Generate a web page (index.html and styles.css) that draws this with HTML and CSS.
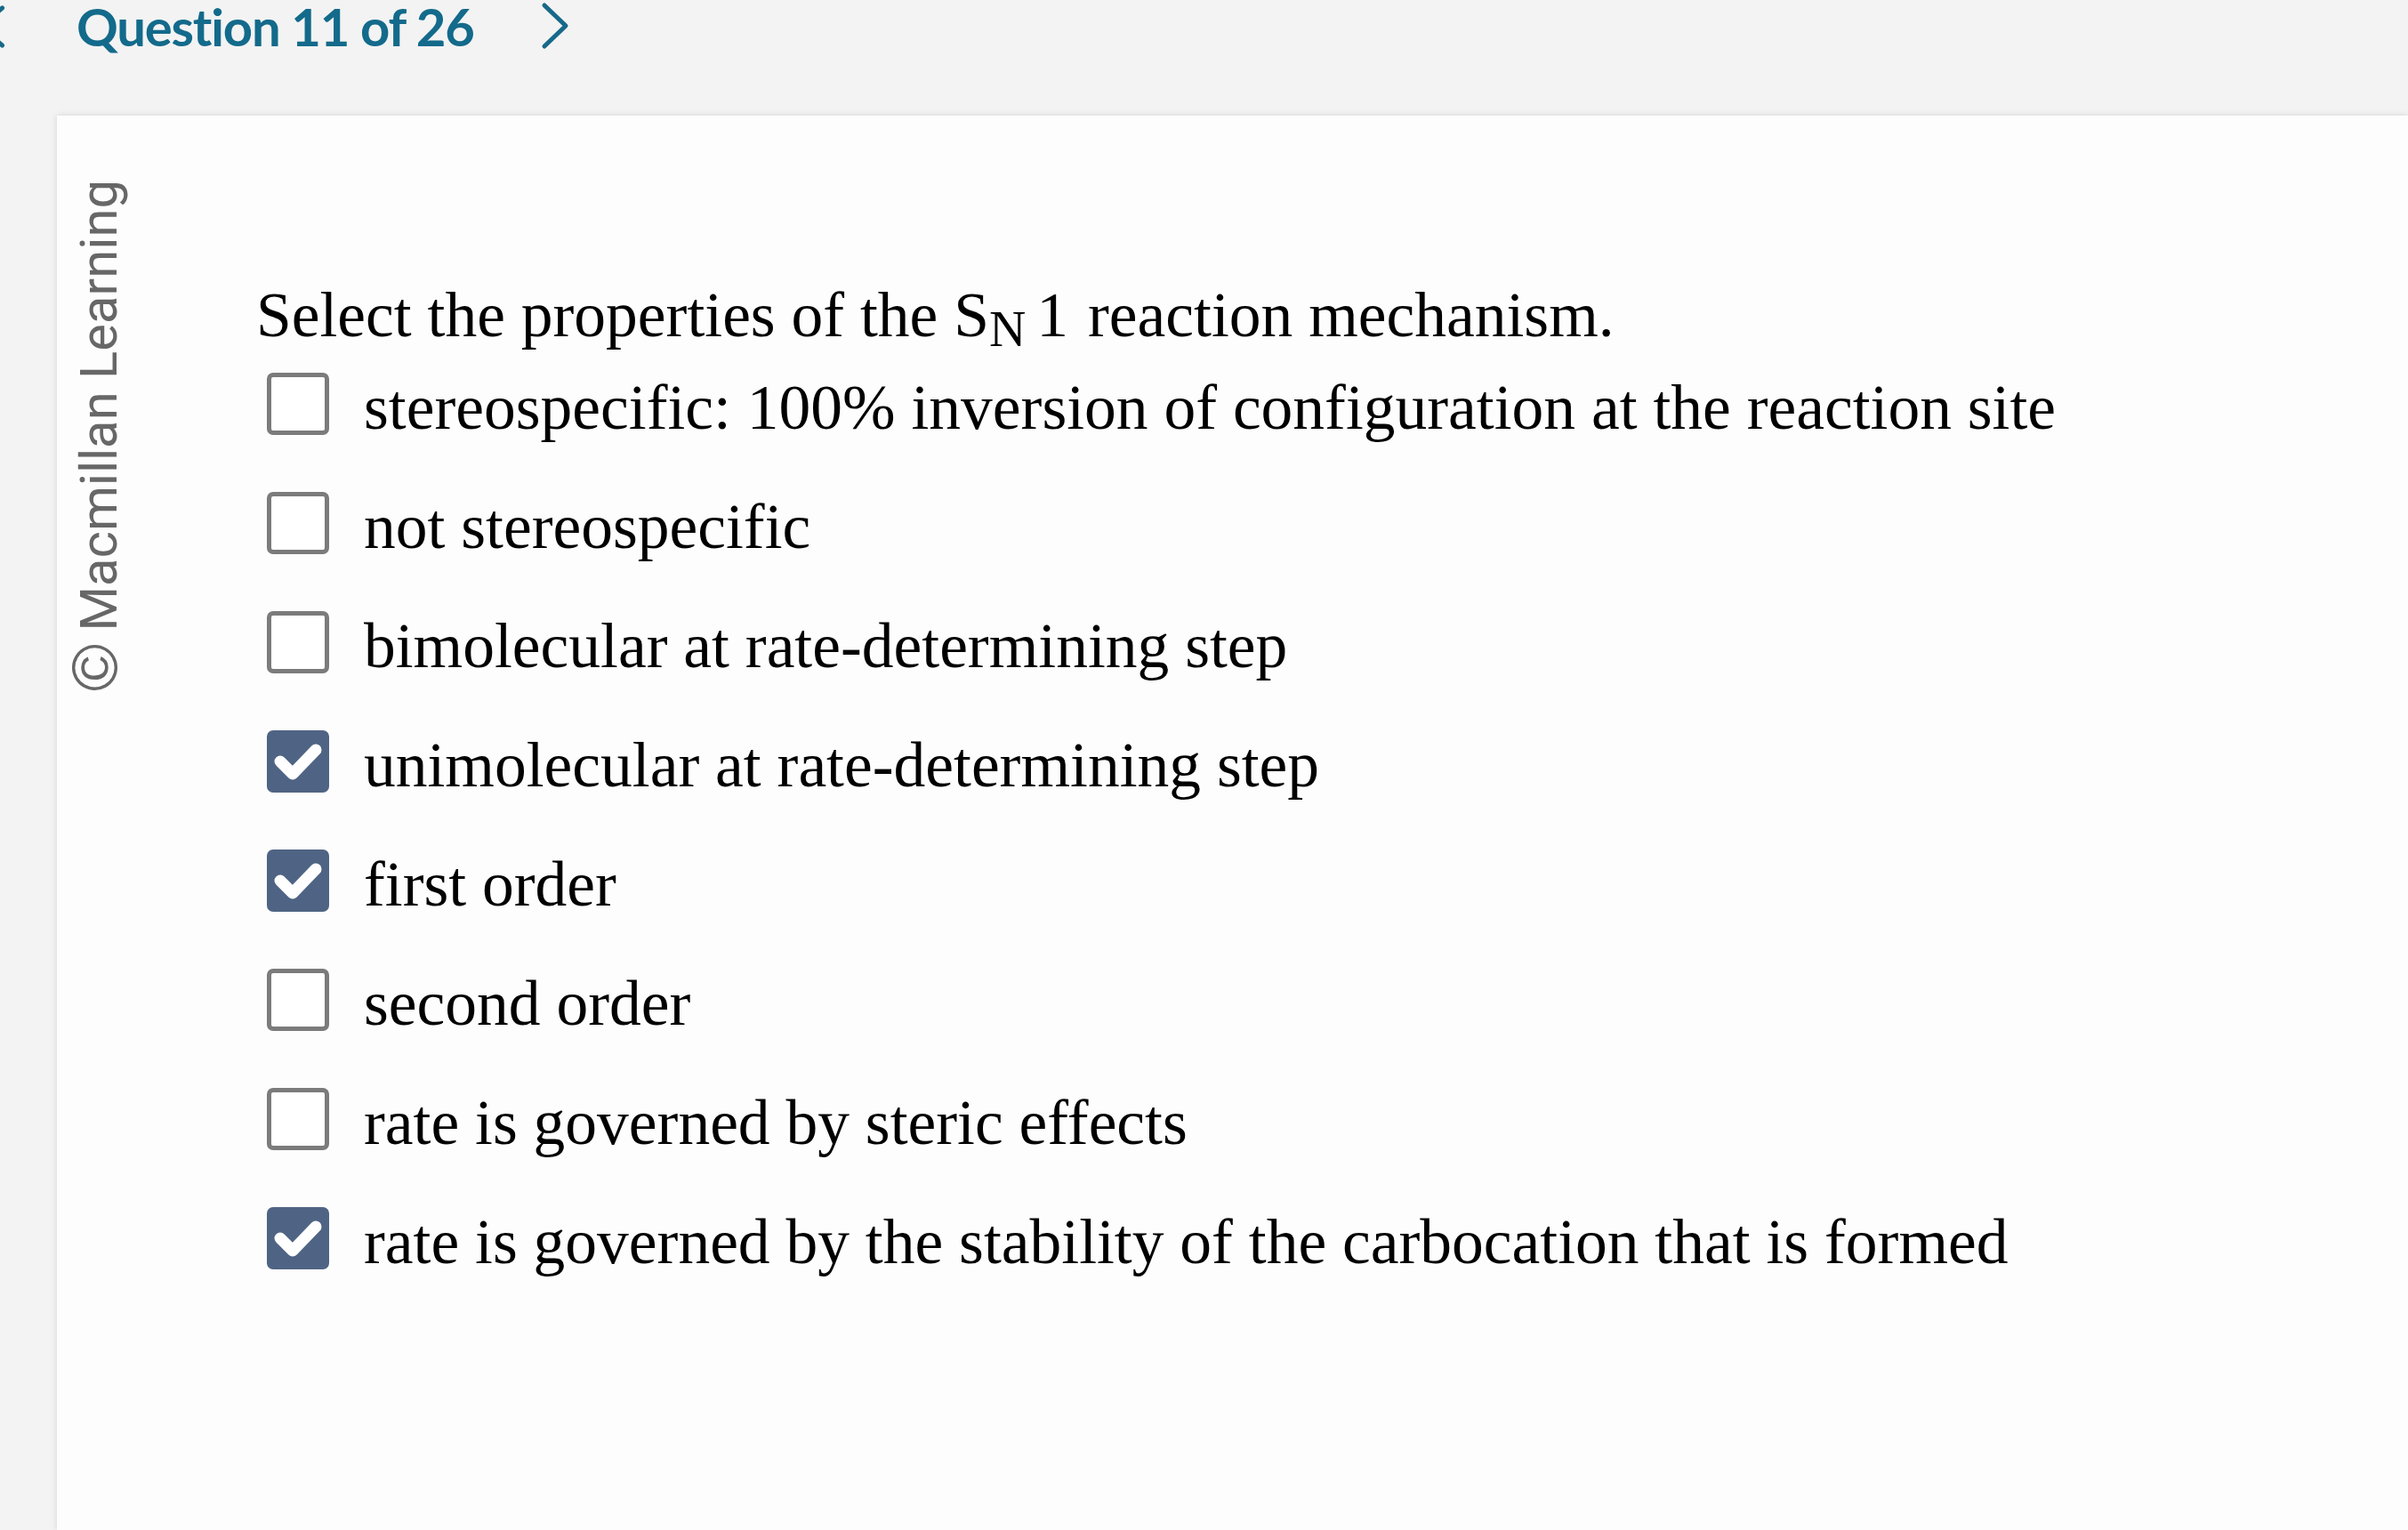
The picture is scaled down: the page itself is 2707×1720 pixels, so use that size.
FILE: index.html
```html
<!DOCTYPE html>
<html lang="en">
<head>
<meta charset="utf-8">
<title>Question 11 of 26</title>
<link rel="stylesheet" href="styles.css">
</head>
<body>
<header class="topbar">
  <svg class="chev chev-prev" width="8" height="60" viewBox="0 0 8 60" aria-hidden="true"><polyline points="2.5,9 -22,30 2.5,51" /></svg>
  <h1 class="qtitle">Question 11 of 26</h1>
  <svg class="chev chev-next" width="34" height="60" viewBox="0 0 34 60" aria-hidden="true"><polyline points="5,6 29,29 5,52" /></svg>
</header>
<main class="card">
  <div class="credit"><span class="credit-text"><span class="copy">©</span> Macmillan Learning</span></div>
  <section class="content">
    <p class="question">Select the properties of the S<sub class="sub">N</sub><span class="one">1</span>reaction mechanism.</p>
    <ul class="options">
      <li class="option"><span class="box"></span><span class="label">stereospecific: 100% inversion of configuration at the reaction site</span></li>
      <li class="option"><span class="box"></span><span class="label">not stereospecific</span></li>
      <li class="option"><span class="box"></span><span class="label">bimolecular at rate-determining step</span></li>
      <li class="option"><span class="box checked"><svg viewBox="0 0 70 70" width="70" height="70"><polyline points="15,35 29,49 55,22"/></svg></span><span class="label">unimolecular at rate-determining step</span></li>
      <li class="option"><span class="box checked"><svg viewBox="0 0 70 70" width="70" height="70"><polyline points="15,35 29,49 55,22"/></svg></span><span class="label">first order</span></li>
      <li class="option"><span class="box"></span><span class="label">second order</span></li>
      <li class="option"><span class="box"></span><span class="label">rate is governed by steric effects</span></li>
      <li class="option"><span class="box checked"><svg viewBox="0 0 70 70" width="70" height="70"><polyline points="15,35 29,49 55,22"/></svg></span><span class="label">rate is governed by the stability of the carbocation that is formed</span></li>
    </ul>
  </section>
</main>
</body>
</html>
```
FILE: styles.css
```css
html, body {
  margin: 0;
  padding: 0;
}
body {
  width: 2707px;
  height: 1720px;
  overflow: hidden;
  background: #f3f3f3;
}
.topbar {
  height: 130px;
  display: flex;
  align-items: flex-start;
}
.chev {
  display: block;
  fill: none;
  stroke: #16698a;
  stroke-width: 5;
  stroke-linecap: round;
  stroke-linejoin: round;
}
.chev-next {
  margin-left: 74px;
}
.qtitle {
  margin: 1px 0 0 78px;
  font-family: "Lato", "Open Sans", sans-serif;
  font-weight: 700;
  font-size: 58px;
  line-height: 58px;
  letter-spacing: -1.2px;
  color: #136a8b;
}
.card {
  margin-left: 64px;
  height: 1590px;
  background: #fdfdfd;
  box-shadow: 0 0 7px rgba(0, 0, 0, 0.13);
  display: flex;
  align-items: flex-start;
}
.credit {
  flex: none;
  width: 58px;
  margin-left: 13px;
  padding-top: 72px;
}
.credit-text {
  display: block;
  width: 58px;
  writing-mode: vertical-rl;
  text-orientation: sideways;
  transform: rotate(180deg);
  font-family: "Roboto", "Liberation Sans", sans-serif;
  font-size: 58px;
  line-height: 58px;
  color: #676767;
  white-space: nowrap;
}
.copy {
  font-family: "Liberation Sans", sans-serif;
  font-size: 72px;
  line-height: 58px;
}
.content {
  margin-left: 153px;
  padding-top: 182px;
  font-family: "Liberation Serif", "Times New Roman", serif;
  font-size: 71.5px;
  line-height: 83px;
  color: #000000;
}
.question {
  margin: 0;
  white-space: nowrap;
}
.sub {
  font-size: 0.8em;
  vertical-align: -0.2em;
  line-height: 0;
}
.one {
  margin-left: 12px;
  margin-right: 22px;
}
.options {
  list-style: none;
  margin: 21px 0 0 0;
  padding: 0;
  display: flex;
  flex-direction: column;
  gap: 51px;
}
.option {
  display: flex;
  align-items: flex-start;
  margin-left: 12px;
  white-space: nowrap;
}
.box {
  flex: none;
  box-sizing: border-box;
  width: 70px;
  height: 70px;
  margin-top: 3px;
  margin-right: 39px;
  border: 5px solid #7b7b7b;
  border-radius: 7px;
  background: #ffffff;
  position: relative;
}
.box.checked {
  background: #4f6484;
  border-color: #4f6484;
}
.box.checked svg {
  position: absolute;
  left: -5px;
  top: -5px;
  fill: none;
  stroke: #ffffff;
  stroke-width: 13;
  stroke-linecap: round;
  stroke-linejoin: round;
}
```
